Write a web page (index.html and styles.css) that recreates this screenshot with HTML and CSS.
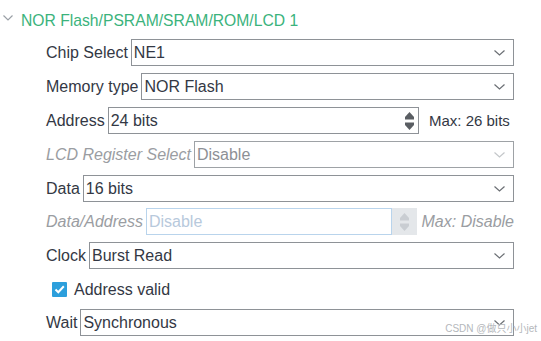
FILE: index.html
```html
<!DOCTYPE html>
<html>
<head>
<meta charset="utf-8">
<link rel="stylesheet" href="styles.css">
</head>
<body>
<div class="panel">
  <div class="header">
    <svg class="hdr-chev" width="10" height="6" viewBox="0 0 10 6"><path d="M0.5 0.5 L5 5 L9.5 0.5" fill="none" stroke="#9aa0a6" stroke-width="1.2"/></svg>
    <span class="hdr-title">NOR Flash/PSRAM/SRAM/ROM/LCD 1</span>
  </div>
  <div class="rows">
    <div class="row">
      <span class="label">Chip Select</span>
      <div class="select"><span class="value">NE1</span><svg class="chev" width="11" height="6" viewBox="0 0 11 6"><path d="M0.5 0.5 L5.5 5 L10.5 0.5" fill="none" stroke="#6b6f74" stroke-width="1.2"/></svg></div>
    </div>
    <div class="row">
      <span class="label">Memory type</span>
      <div class="select"><span class="value">NOR Flash</span><svg class="chev" width="11" height="6" viewBox="0 0 11 6"><path d="M0.5 0.5 L5.5 5 L10.5 0.5" fill="none" stroke="#6b6f74" stroke-width="1.2"/></svg></div>
    </div>
    <div class="row">
      <span class="label">Address</span>
      <div class="spin-input"><span class="value">24 bits</span>
        <svg class="spin" width="11" height="20" viewBox="0 0 11 20"><path d="M5.5 1 L10 6 L10 8.5 L1 8.5 L1 6 Z" fill="#5a5e63"/><path d="M1 11.5 L10 11.5 L10 14 L5.5 19 L1 14 Z" fill="#5a5e63"/></svg>
      </div>
      <span class="max">Max: 26 bits</span>
    </div>
    <div class="row">
      <span class="label dis">LCD Register Select</span>
      <div class="select disabled"><span class="value">Disable</span><svg class="chev" width="11" height="6" viewBox="0 0 11 6"><path d="M0.5 0.5 L5.5 5 L10.5 0.5" fill="none" stroke="#c4c7ca" stroke-width="1.2"/></svg></div>
    </div>
    <div class="row">
      <span class="label">Data</span>
      <div class="select"><span class="value">16 bits</span><svg class="chev" width="11" height="6" viewBox="0 0 11 6"><path d="M0.5 0.5 L5.5 5 L10.5 0.5" fill="none" stroke="#6b6f74" stroke-width="1.2"/></svg></div>
    </div>
    <div class="row tight">
      <span class="label dis">Data/Address</span>
      <div class="dis-input"><span class="value">Disable</span></div>
      <div class="dis-spin">
        <svg width="11" height="20" viewBox="0 0 11 20"><path d="M5.5 1 L10 6 L10 8.5 L1 8.5 L1 6 Z" fill="#c9cdd2"/><path d="M1 11.5 L10 11.5 L10 14 L5.5 19 L1 14 Z" fill="#c9cdd2"/></svg>
      </div>
      <span class="dis-max">Max: Disable</span>
    </div>
    <div class="row">
      <span class="label">Clock</span>
      <div class="select"><span class="value">Burst Read</span><svg class="chev" width="11" height="6" viewBox="0 0 11 6"><path d="M0.5 0.5 L5.5 5 L10.5 0.5" fill="none" stroke="#6b6f74" stroke-width="1.2"/></svg></div>
    </div>
    <div class="row check-row">
      <span class="checkbox"><svg width="15" height="15" viewBox="0 0 15 15"><path d="M3.5 7.5 L6.3 10.3 L11.8 4.3" fill="none" stroke="#fff" stroke-width="2"/></svg></span>
      <span class="label">Address valid</span>
    </div>
    <div class="row tight">
      <span class="label">Wait</span>
      <div class="select"><span class="value">Synchronous</span><svg class="chev" width="11" height="6" viewBox="0 0 11 6"><path d="M0.5 0.5 L5.5 5 L10.5 0.5" fill="none" stroke="#6b6f74" stroke-width="1.2"/></svg></div>
    </div>
  </div>
</div>
<div class="watermark">CSDN @做只小小jet</div>
</body>
</html>
```
FILE: styles.css
```css
html, body {
  margin: 0;
  padding: 0;
  background: #ffffff;
}
body {
  width: 541px;
  height: 341px;
  overflow: hidden;
  position: relative;
  font-family: "Liberation Sans", Arial, sans-serif;
  font-size: 16px;
  color: #333844;
}
.panel {
  padding: 7px 27px 0 0;
}
.header {
  display: flex;
  align-items: center;
  height: 27px;
  margin-bottom: 5px;
}
.hdr-chev {
  margin-left: 3px;
  margin-top: -5px;
}
.hdr-title {
  margin-left: 8px;
  color: #3bb37c;
  font-size: 15.7px;
}
.rows {
  display: flex;
  flex-direction: column;
  gap: 7px;
  padding-left: 46px;
}
.row {
  display: flex;
  align-items: center;
  height: 27px;
  gap: 3px;
}
.row.tight {
  margin-top: -1px;
}
.label {
  white-space: nowrap;
  font-size: 16px;
}
.label.dis {
  color: #9a9da2;
  font-style: italic;
}
.select, .spin-input, .dis-input {
  flex: 1;
  height: 27px;
  box-sizing: border-box;
  border: 1px solid #8e9297;
  background: #fff;
  display: flex;
  align-items: center;
  padding-left: 2px;
  padding-right: 8px;
}
.value {
  flex: 1;
  white-space: nowrap;
  font-size: 16px;
}
.select.disabled {
  border-color: #9ea2a6;
}
.select.disabled .value {
  color: #8d9095;
}
.spin-input {
  padding-right: 3px;
}
.max {
  flex: 0 0 85px;
  margin-left: -3px;
  padding-left: 10px;
  white-space: nowrap;
  font-size: 15px;
}
.dis-input {
  border-color: #b9d4ec;
  padding-right: 0;
}
.dis-input .value {
  color: #b7c9dc;
}
.dis-spin {
  flex: 0 0 25px;
  height: 27px;
  margin-left: -3px;
  background: #e4e7ea;
  display: flex;
  align-items: center;
  justify-content: center;
}
.dis-max {
  flex: 0 0 92px;
  margin-left: -3px;
  padding-left: 5px;
  white-space: nowrap;
  color: #9a9da2;
  font-style: italic;
  font-size: 16px;
}
.check-row {
  gap: 7px;
}
.checkbox {
  width: 15px;
  height: 15px;
  margin-left: 6px;
  background: #2c9fdc;
  border-radius: 1px;
  display: flex;
}
.watermark {
  position: absolute;
  right: 4px;
  bottom: 6px;
  font-family: "Liberation Sans", "Noto Sans CJK SC", sans-serif;
  font-size: 10px;
  color: #b4b7bb;
}
```
